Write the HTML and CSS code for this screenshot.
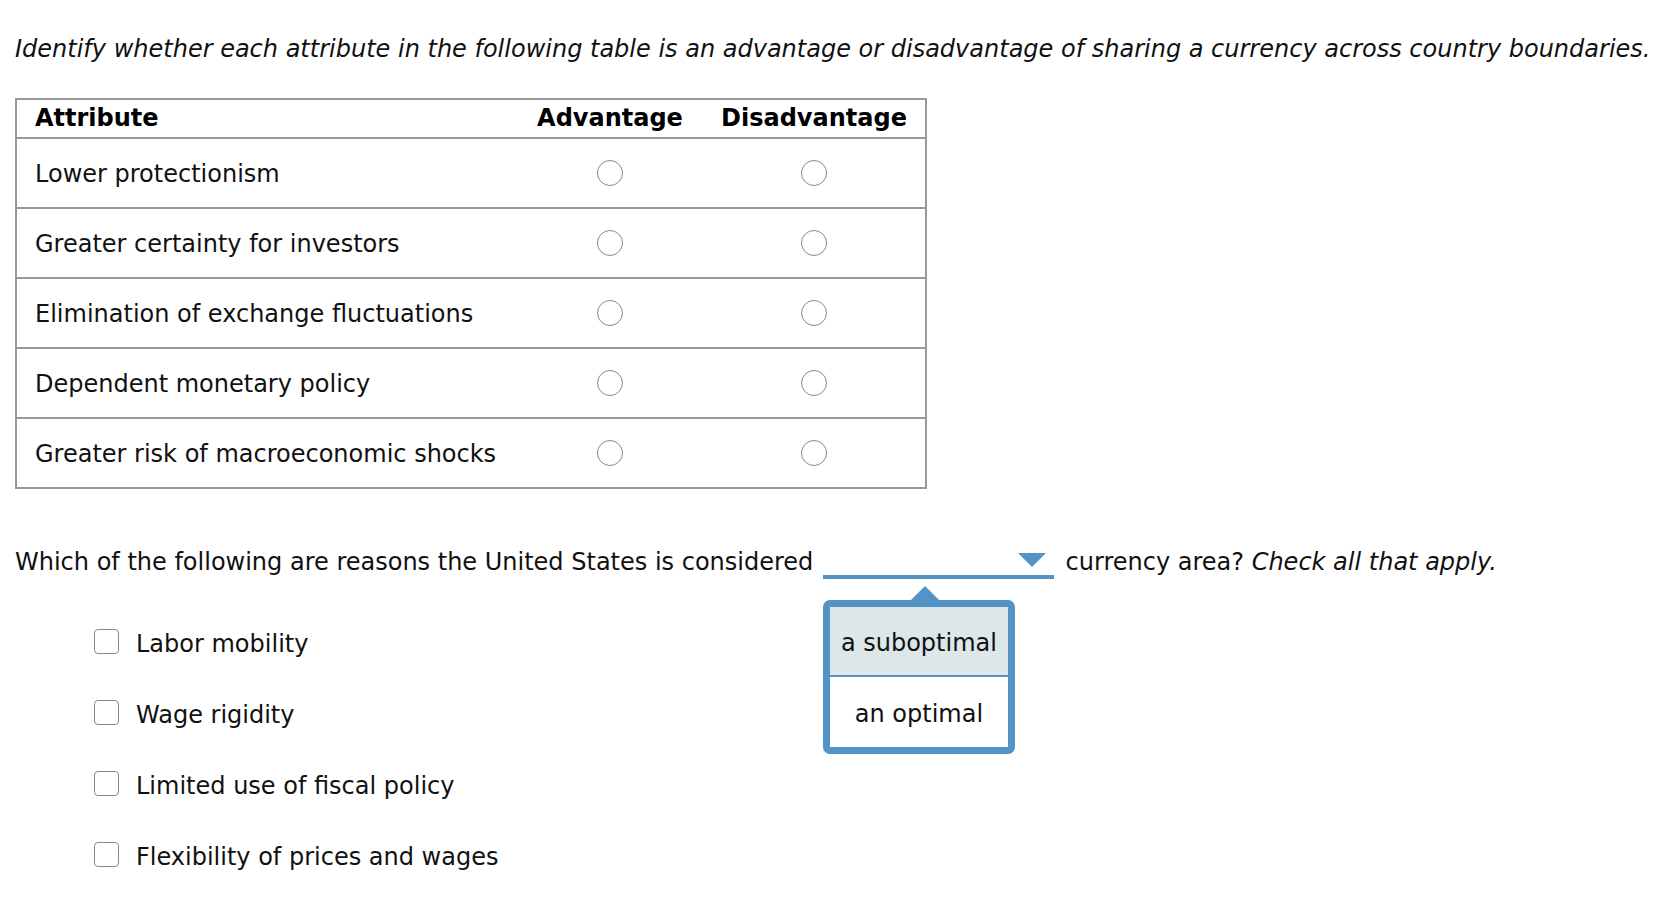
FILE: index.html
```html
<!DOCTYPE html>
<html lang="en">
<head>
<meta charset="utf-8">
<title>Currency area question</title>
<link rel="stylesheet" href="styles.css">
</head>
<body>
<main class="page">
  <p class="intro">Identify whether each attribute in the following table is an advantage or disadvantage of sharing a currency across country boundaries.</p>

  <div class="table">
    <div class="row head">
      <div class="cell attr">Attribute</div>
      <div class="cell opt">Advantage</div>
      <div class="cell opt">Disadvantage</div>
    </div>
    <div class="row">
      <div class="cell attr">Lower protectionism</div>
      <div class="cell opt"><span class="radio"></span></div>
      <div class="cell opt"><span class="radio"></span></div>
    </div>
    <div class="row">
      <div class="cell attr">Greater certainty for investors</div>
      <div class="cell opt"><span class="radio"></span></div>
      <div class="cell opt"><span class="radio"></span></div>
    </div>
    <div class="row">
      <div class="cell attr">Elimination of exchange fluctuations</div>
      <div class="cell opt"><span class="radio"></span></div>
      <div class="cell opt"><span class="radio"></span></div>
    </div>
    <div class="row">
      <div class="cell attr">Dependent monetary policy</div>
      <div class="cell opt"><span class="radio"></span></div>
      <div class="cell opt"><span class="radio"></span></div>
    </div>
    <div class="row">
      <div class="cell attr">Greater risk of macroeconomic shocks</div>
      <div class="cell opt"><span class="radio"></span></div>
      <div class="cell opt"><span class="radio"></span></div>
    </div>
  </div>

  <p class="question">Which of the following are reasons the United States is considered <span class="select"><span class="caret"></span><span class="menu"><span class="menu-item active">a suboptimal</span><span class="menu-item">an optimal</span></span></span> currency area? <em>Check all that apply.</em></p>

  <ul class="checks">
    <li class="check"><span class="box"></span><span>Labor mobility</span></li>
    <li class="check"><span class="box"></span><span>Wage rigidity</span></li>
    <li class="check"><span class="box"></span><span>Limited use of fiscal policy</span></li>
    <li class="check"><span class="box"></span><span>Flexibility of prices and wages</span></li>
  </ul>
</main>
</body>
</html>
```

FILE: styles.css
```css
html, body {
  margin: 0;
  background: #fff;
}

body {
  font-family: "DejaVu Sans", Verdana, sans-serif;
  font-size: 24px;
  line-height: 28px;
  color: #111;
}

.page {
  padding: 35px 15px 0 15px;
}

.intro {
  margin: 0 0 35px 0;
  font-style: italic;
  white-space: nowrap;
}

.table {
  width: 912px;
  box-sizing: border-box;
  border: 2px solid #999;
}

.row {
  display: grid;
  grid-template-columns: 500px 186px 222px;
  align-items: center;
  height: 70px;
  box-sizing: border-box;
  border-top: 2px solid #999;
}

.row.head {
  height: 37px;
  border-top: 0;
  font-weight: bold;
  color: #000;
}

.cell.attr {
  padding-left: 18px;
  padding-top: 2px;
}

.row.head .cell {
  padding-top: 0;
  padding-bottom: 2px;
}

.cell.opt {
  display: flex;
  justify-content: center;
  align-items: center;
}

.radio {
  width: 26px;
  height: 26px;
  box-sizing: border-box;
  border: 1.3px solid #8a8a8a;
  border-radius: 50%;
  background: #fff;
}

.question {
  margin: 59px 0 0 0;
}

.select {
  position: relative;
  display: inline-flex;
  justify-content: flex-end;
  align-items: flex-start;
  width: 231px;
  height: 26px;
  box-sizing: border-box;
  padding-right: 8px;
  margin-left: 2px;
  margin-right: 4px;
  vertical-align: 3px;
  border-bottom: 4px solid #5393c6;
}

.caret {
  width: 0;
  height: 0;
  border-left: 14px solid transparent;
  border-right: 14px solid transparent;
  border-top: 14px solid #5393c6;
}

.menu {
  position: absolute;
  left: 0;
  top: 47px;
  width: 192px;
  box-sizing: border-box;
  border: 7px solid #5393c6;
  border-radius: 7px;
  background: #fff;
  display: flex;
  flex-direction: column;
}

.menu::before {
  content: "";
  position: absolute;
  left: 81px;
  top: -21px;
  border-left: 14px solid transparent;
  border-right: 14px solid transparent;
  border-bottom: 14px solid #5393c6;
}

.menu-item {
  display: flex;
  justify-content: center;
  align-items: center;
  height: 70px;
  box-sizing: border-box;
  padding-top: 4px;
  background: #fff;
}

.menu-item.active {
  height: 70px;
  background: #dde6e9;
  border-bottom: 2px solid #5393c6;
}

.question em {
  font-style: italic;
}

.checks {
  list-style: none;
  margin: 29px 0 0 0;
  padding: 0 0 0 79px;
}

.check {
  display: flex;
  align-items: center;
  height: 71.2px;
  gap: 17px;
}

.box {
  flex: none;
  width: 25px;
  height: 25px;
  box-sizing: border-box;
  border: 1.3px solid #8a8a8a;
  border-radius: 4px;
  margin-bottom: 5px;
  background: #fff;
}
```
